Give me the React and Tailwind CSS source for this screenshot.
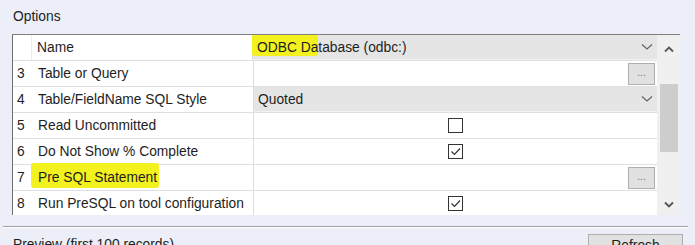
import React from "react";

const font = { fontFamily: '"Segoe UI", "Liberation Sans", Arial, sans-serif' };

function Chevron() {
  return (
    <svg width="12" height="8" viewBox="0 0 12 8" className="text-[#606060]">
      <path d="M1 1.5 L6 6 L11 1.5" fill="none" stroke="currentColor" strokeWidth="1.1" />
    </svg>
  );
}

function Ellipsis() {
  return (
    <div className="w-[27px] h-[22px] bg-[#e1e1e1] border border-[#adadad] flex items-center justify-center text-[10px] leading-none text-[#707070] pb-[2px]">
      ...
    </div>
  );
}

function Check({ checked }) {
  return (
    <div className="w-[15px] h-[15px] border border-[#333333] bg-white flex items-center justify-center">
      {checked && (
        <svg width="13" height="13" viewBox="0 0 13 13">
          <path d="M2.5 6.5 L5.5 9.5 L11 3.5" fill="none" stroke="#333" strokeWidth="1.2" />
        </svg>
      )}
    </div>
  );
}

const rows = [
  { num: "", name: "Name", kind: "combo", value: "ODBC Database (odbc:)", hlValue: true },
  { num: "3", name: "Table or Query", kind: "button" },
  { num: "4", name: "Table/FieldName SQL Style", kind: "combo", value: "Quoted" },
  { num: "5", name: "Read Uncommitted", kind: "check", checked: false },
  { num: "6", name: "Do Not Show % Complete", kind: "check", checked: true },
  { num: "7", name: "Pre SQL Statement", kind: "button", hlName: true },
  { num: "8", name: "Run PreSQL on tool configuration", kind: "check", checked: true },
];

function ValueCell({ row }) {
  if (row.kind === "combo") {
    return (
      <div className="flex-1 h-full bg-[#e5e5e5] border-b border-[#f2f2f2] flex items-center justify-between pr-[4px]">
        <span className="pl-[4px] pt-[2px] relative">
          {row.hlValue && (
            <span className="absolute left-[-1px] top-[-2px] w-[66px] h-[22px] bg-[#f3f21e] rounded-[3px]" />
          )}
          <span className="relative">{row.value}</span>
        </span>
        <Chevron />
      </div>
    );
  }
  if (row.kind === "button") {
    return (
      <div className="flex-1 h-full bg-white flex items-center justify-end pr-[2px]">
        <Ellipsis />
      </div>
    );
  }
  return (
    <div className="flex-1 h-full bg-white flex items-center pl-[194px]">
      <Check checked={row.checked} />
    </div>
  );
}

export default function App() {
  return (
    <div className="w-[695px] h-[245px] bg-[#eceff8] overflow-hidden text-[13.8px] text-[#1e1e1e]" style={font}>
      <div className="pt-[9px] pl-[13px] leading-[16px]">Options</div>
      <div className="mt-[9px] ml-[12px] w-[668px] h-[181px] flex border-t border-[#7f7f7f] overflow-hidden">
        <div className="w-[645px] border-l border-[#6f6f6f] bg-white">
          {rows.map((row, i) => (
            <div key={i} className="h-[26px] flex border-b border-[#e0e0e0]">
              <div className={`w-[19px] flex items-center pl-[4px] pt-[2px] ${i === 0 ? "border-r border-[#ececec]" : ""}`}>
                {row.num}
              </div>
              <div className={`flex items-center pt-[2px] border-r border-[#dcdcdc] ${i === 0 ? "w-[221px] pl-[5px]" : "w-[222px] pl-[6px]"}`}>
                <span className="relative">
                  {row.hlName && (
                    <span className="absolute left-[-7px] top-[-5px] w-[128px] h-[25px] bg-[#f3f21e] rounded-[3px]" />
                  )}
                  <span className="relative">{row.name}</span>
                </span>
              </div>
              <ValueCell row={row} />
            </div>
          ))}
        </div>
        <div className="w-[23px] bg-[#f0f0f0] flex flex-col items-center">
          <div className="h-[26px] pt-[2px] flex items-center justify-center">
            <svg width="10" height="7" viewBox="0 0 10 7">
              <path d="M1 5.5 L5 1.5 L9 5.5" fill="none" stroke="#555" strokeWidth="1.8" />
            </svg>
          </div>
          <div className="mt-[23px] w-[18px] h-[68px] bg-[#cdcdcd]" />
          <div className="mt-[41px] h-[22px] flex items-center justify-center">
            <svg width="10" height="7" viewBox="0 0 10 7">
              <path d="M1 1.5 L5 5.5 L9 1.5" fill="none" stroke="#555" strokeWidth="1.8" />
            </svg>
          </div>
        </div>
      </div>
      <div className="mt-[11px] ml-[3px] w-[685px] h-[1px] bg-[#a0a0a0]" />
      <div className="ml-[3px] w-[685px] h-[1px] bg-white" />
      <div className="mt-[6px] flex items-start justify-between pl-[13px] pr-[12px]">
        <div className="mt-[3px] leading-[16px]">Preview (first 100 records)</div>
        <div className="w-[95px] h-[24px] bg-[#e1e1e1] border border-[#adadad] flex justify-center pt-[3px] leading-[16px]">
          Refresh
        </div>
      </div>
    </div>
  );
}
